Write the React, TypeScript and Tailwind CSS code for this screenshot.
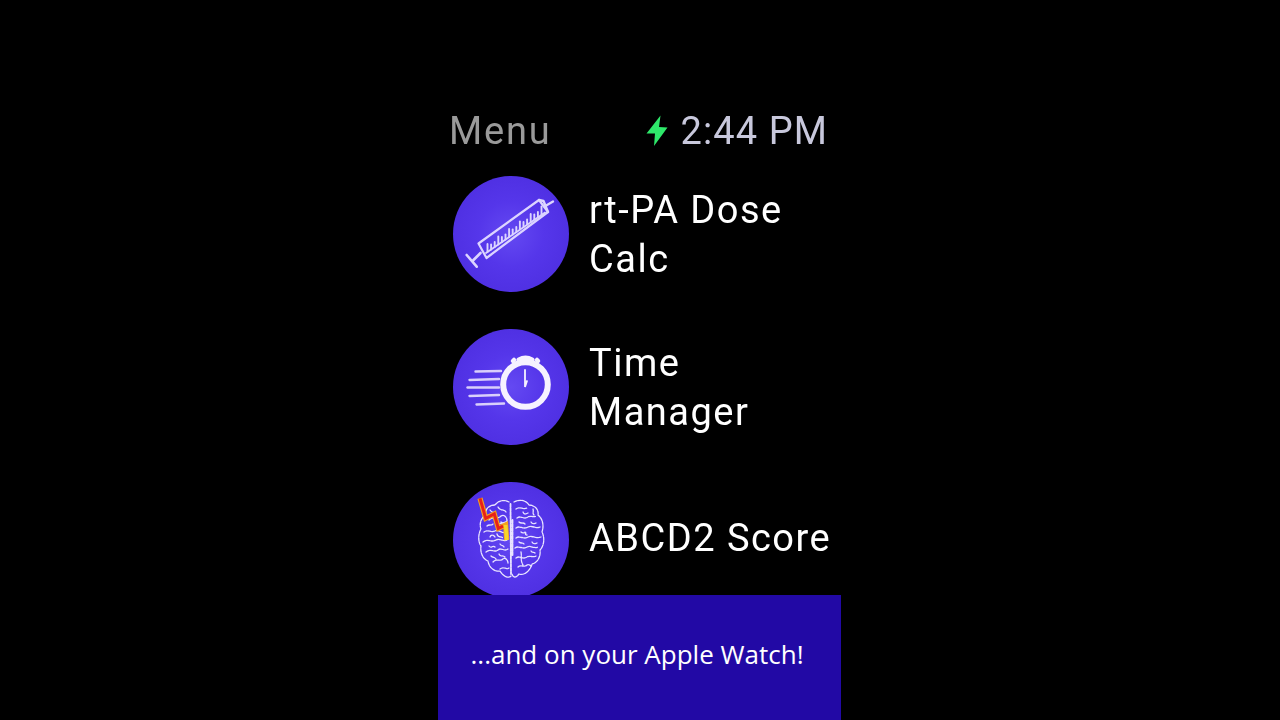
const ticks = Array.from({ length: 16 }, (_, i) => i);

function Syringe() {
  return (
    <svg viewBox="0 0 116 116" className="w-full h-full blur-[0.5px]" fill="none" stroke="#dcd4ff" strokeLinecap="round" strokeLinejoin="round">
      <path d="M25.5 67.5 L86 24 L95 36 L33.5 82 Z" strokeWidth="2.2" />
      <path d="M86 24 L90.5 25 L95 36 M91.5 30.5 L100 25.5" strokeWidth="2.4" />
      <path d="M27.5 77 L20 84.5 M13.7 79 L23.7 90.7" strokeWidth="2.6" />
      <path d="M33 77 L92 36.5" strokeWidth="1.8" />
      {ticks.map((i) => {
        const x = 34.5 + i * 3.6;
        const y = 76 - i * 2.5;
        const len = i % 3 === 0 ? 8 : 5;
        return <path key={i} d={`M${x} ${y} L${x} ${y - len}`} strokeWidth="1.9" />;
      })}
    </svg>
  );
}

function Stopwatch() {
  return (
    <svg viewBox="0 0 116 116" className="w-full h-full blur-[0.5px]" fill="none" stroke="#f6f2ff" strokeLinecap="round">
      <circle cx="72.5" cy="55.5" r="22.3" strokeWidth="6" />
      <path d="M60 32 L61 31 M85 32 L84 31" strokeWidth="4.5" />
      <path d="M66 31 Q72.5 27 79 31" strokeWidth="5" />
      <path d="M72 41 L72 58 L74 52" strokeWidth="1.8" />
      <path d="M22.5 42.5 L48 42" strokeWidth="2.4" stroke="#d9cffb" />
      <path d="M16.5 51 L46 50" strokeWidth="2.4" stroke="#d9cffb" />
      <path d="M14.5 58.5 L46 58.5" strokeWidth="2.4" stroke="#d9cffb" />
      <path d="M16.5 67 L46 66" strokeWidth="2.4" stroke="#d9cffb" />
      <path d="M23.5 75.5 L51 74.5" strokeWidth="2.4" stroke="#d9cffb" />
    </svg>
  );
}

function Brain() {
  return (
    <svg viewBox="0 0 116 116" className="w-full h-full blur-[0.4px]" fill="none" strokeLinecap="round" strokeLinejoin="round">
      <g stroke="#e9e4ff" strokeWidth="1.3" strokeDasharray="3 1">
        <path d="M56 20 C50 17 45 19 42 23 C36 23 32 27 33 32 C28 36 26 42 28 47 C25 52 25 60 28 64 C27 71 30 77 35 79 C36 86 42 90 47 89 C50 94 55 97 58 94" />
        <path d="M61 20 C66 17 73 18 76 23 C82 23 86 28 85 33 C90 37 91 44 89 50 C92 56 91 64 87 68 C88 75 84 81 79 82 C77 89 71 94 66 92 C63 96 60 96 59 92" />
        <path d="M57.5 22 L58 92 M59.5 38 L59.5 74" strokeWidth="1.8" />
        <path d="M36 38 C40 34 44 38 48 34 C51 32 54 35 54 39 C51 42 47 40 45 43 M31 50 C35 47 38 51 42 49 C46 47 48 52 53 50 M44 52 C45 56 48 54 50 56" />
        <path d="M30 60 C35 56 38 61 43 58 C47 56 50 60 54 58 M33 70 C38 66 41 71 45 68 C49 65 51 70 55 67 M37 55 C38 52 41 53 42 55 M36 64 C38 67 40 63 42 65 M47 62 C48 64 50 63 51 65" />
        <path d="M40 80 C43 76 47 80 50 77 C52 75 55 78 55 81 M47 87 C51 84 53 88 56 86 M38 74 C40 76 42 75 43 77 M46 72 C47 75 50 73 52 75" />
        <path d="M45 25 C47 29 51 27 53 30 M37 28 C39 31 42 30 43 33 M34 44 C36 42 39 44 40 42 M48 40 C50 42 52 41 54 44" />
        <path d="M63 27 C67 24 70 28 74 26 M64 36 C68 33 71 38 75 35 C78 33 81 36 83 34 M70 30 C71 33 73 32 75 31 M80 27 C81 30 79 31 81 33" />
        <path d="M63 46 C67 43 70 48 75 45 C79 43 83 47 87 45 M63 56 C67 53 71 58 75 55 C79 53 83 57 88 55 M78 40 C79 42 81 42 83 41 M66 40 C68 42 70 40 72 42 M68 50 C70 52 71 50 73 51" />
        <path d="M62 66 C66 63 70 68 74 65 C78 63 81 67 85 65 M63 76 C67 73 70 78 74 75 C77 73 80 76 83 74 M72 50 C73 52 72 53 74 53 M66 60 C68 62 70 60 71 62 M78 69 C79 71 81 70 82 71" />
        <path d="M65 85 C68 82 71 86 74 83 C75 82 77 83 78 84 M68 70 C69 74 67 78 70 83 M79 60 C80 62 82 62 84 61" />
      </g>
      <path d="M27 16.3 L32.7 36.3 L41.3 32 L45.3 46.3 L52.7 43 L53.7 58" stroke="#f4a21f" strokeWidth="5.2" strokeLinejoin="miter" strokeLinecap="butt" />
      <path d="M27 16.3 L32.7 36.3 L41.3 32 L45.3 46.3 L50 44.2" stroke="#e8201a" strokeWidth="3" strokeLinejoin="miter" strokeLinecap="butt" />
      <path d="M52.7 43 L53.7 58" stroke="#f7d62a" strokeWidth="3.6" strokeLinecap="butt" />
    </svg>
  );
}

function MenuRow({ label, icon, labelClass }: { label: React.ReactNode; icon: React.ReactNode; labelClass?: string }) {
  return (
    <div className="flex items-center gap-5 pl-[15px] shrink-0">
      <div className="w-[116px] h-[116px] shrink-0 rounded-full bg-[radial-gradient(circle_at_50%_50%,#6449f2_0%,#5536ea_40%,#4a2bdc_100%)]">
        {icon}
      </div>
      <div className={`text-white text-[38px] leading-[49px] font-normal tracking-[1.5px] blur-[0.3px] ${labelClass ?? 'pt-[2px]'}`}>{label}</div>
    </div>
  );
}

export default function App() {
  return (
    <div className="w-full h-[720px] bg-black flex justify-center overflow-hidden font-['Roboto',sans-serif]">
      <div className="w-[403px] h-full flex flex-col mr-[1px]">
        <div className="flex items-center justify-between pt-[112px] pl-[11px] pr-[13px] h-[150px] shrink-0">
          <span className="text-[#9a9a9a] text-[38px] leading-[38px] tracking-[1.8px] blur-[0.3px]">Menu</span>
          <div className="flex items-center gap-[12px]">
            <svg viewBox="0 0 22 32" className="w-[22px] h-[32px]">
              <path d="M14.5 0.5 L0.5 18.5 L9 18.5 L8 31 L21.5 12.5 L13 12 Z" fill="#2ee86a" />
            </svg>
            <span className="text-[#c8c8dc] text-[38px] leading-[38px] tracking-[1.1px] blur-[0.3px]">2:44 PM</span>
          </div>
        </div>
        <div className="flex-1 min-h-0 overflow-hidden flex flex-col gap-[37px] pt-[26px]">
          <MenuRow icon={<Syringe />} label={<>rt-PA Dose<br />Calc</>} />
          <MenuRow icon={<Stopwatch />} label={<>Time<br />Manager</>} />
          <MenuRow icon={<Brain />} label="ABCD2 Score" labelClass="pb-[3px]" />
        </div>
        <div className="h-[125px] shrink-0 bg-[#2209a5] flex items-center justify-center pr-[5px] pb-[6px]">
          <span className="text-white text-[26px] font-['Open_Sans',sans-serif] font-normal">...and on your Apple Watch!</span>
        </div>
      </div>
    </div>
  );
}
